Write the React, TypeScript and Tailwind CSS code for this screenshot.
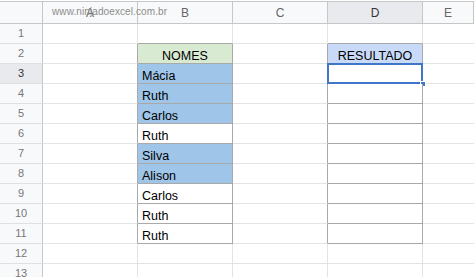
import React from "react";

type Row = {
  n: number;
  b?: string;
  d?: string;
  bBg?: string;
  dBg?: string;
  center?: boolean;
  boxed?: boolean;
  top?: boolean;
  selected?: boolean;
};

const rows: Row[] = [
  { n: 1, top: true },
  { n: 2, b: "NOMES", d: "RESULTADO", bBg: "bg-[#d9ead3]", dBg: "bg-[#c9daf8]", center: true, boxed: true },
  { n: 3, b: "Mácia", bBg: "bg-[#9fc5e8]", boxed: true, selected: true },
  { n: 4, b: "Ruth", bBg: "bg-[#9fc5e8]", boxed: true },
  { n: 5, b: "Carlos", bBg: "bg-[#9fc5e8]", boxed: true },
  { n: 6, b: "Ruth", boxed: true },
  { n: 7, b: "Silva", bBg: "bg-[#9fc5e8]", boxed: true },
  { n: 8, b: "Alison", bBg: "bg-[#9fc5e8]", boxed: true },
  { n: 9, b: "Carlos", boxed: true },
  { n: 10, b: "Ruth", boxed: true },
  { n: 11, b: "Ruth", boxed: true },
  { n: 12 },
  { n: 13 },
];

function ColHead({ label, active, wide }: { label: string; active?: boolean; wide?: boolean }) {
  return (
    <div
      className={`${wide ? "flex-1" : "w-[95px]"} shrink-0 h-full flex items-center justify-center border-r border-[#c7c7c7] text-[12px] ${
        active ? "bg-[#e8eaed] text-[#333]" : "bg-[#f8f9fa] text-[#666]"
      }`}
    >
      {label}
    </div>
  );
}

function SheetRow({ row }: { row: Row }) {
  const dark = "border-[#a9a9a9]";
  const light = "border-[#e2e3e3]";
  const text = `text-[12.5px] leading-none pb-[1px] flex items-end text-black ${row.center ? "justify-center" : "px-[4px]"}`;

  return (
    <div className="flex h-[20px] shrink-0">
      <div
        className={`w-[43px] shrink-0 flex items-center justify-center border-r border-b border-r-[#c7c7c7] border-b-[#e0e0e0] text-[11px] ${
          row.selected ? "bg-[#e8eaed] text-[#333]" : "bg-[#f8f9fa] text-[#777]"
        }`}
      >
        {row.n}
      </div>
      <div className={`w-[95px] shrink-0 border-r border-b border-b-[#e2e3e3] ${row.boxed ? "border-r-[#a9a9a9]" : "border-r-[#e2e3e3]"}`} />
      <div
        className={`w-[95px] shrink-0 border-r border-b ${row.boxed ? dark : light} ${row.top ? "border-b-[#a9a9a9]" : ""} ${
          row.bBg ?? "bg-white"
        } ${text}`}
      >
        {row.b}
      </div>
      <div className={`w-[95px] shrink-0 border-r border-b border-b-[#e2e3e3] ${row.boxed ? "border-r-[#a9a9a9]" : "border-r-[#e2e3e3]"}`} />
      <div
        className={`relative w-[95px] shrink-0 border-r border-b ${row.boxed ? dark : light} ${row.top ? "border-b-[#a9a9a9]" : ""} ${
          row.dBg ?? "bg-white"
        } ${text}`}
      >
        {row.d}
        {row.selected && (
          <>
            <div className="absolute -left-px -top-px -right-px -bottom-px border-2 border-[#3f76c8]" />
            <div className="absolute right-[-4px] bottom-[-4px] w-[6px] h-[6px] bg-[#3f76c8] border border-white" />
          </>
        )}
      </div>
      <div className={`flex-1 border-b ${light}`} />
    </div>
  );
}

export default function App() {
  return (
    <div
      className="w-[474px] h-[277px] overflow-hidden bg-white flex flex-col"
      style={{ fontFamily: '"Liberation Sans", Arial, sans-serif' }}
    >
      <div className="relative mt-px flex h-[23px] shrink-0 border-t border-b border-[#c7c7c7]">
        <div className="w-[43px] shrink-0 h-full bg-[#f8f9fa] border-r border-[#c7c7c7]" />
        <ColHead label="A" />
        <ColHead label="B" />
        <ColHead label="C" />
        <ColHead label="D" active />
        <ColHead label="E" wide />
        <span className="absolute left-[52px] top-[2px] text-[10px] text-[#8c8c8c] tracking-[0.1px]">
          www.ninjadoexcel.com.br
        </span>
      </div>
      {rows.map((r) => (
        <SheetRow key={r.n} row={r} />
      ))}
    </div>
  );
}
